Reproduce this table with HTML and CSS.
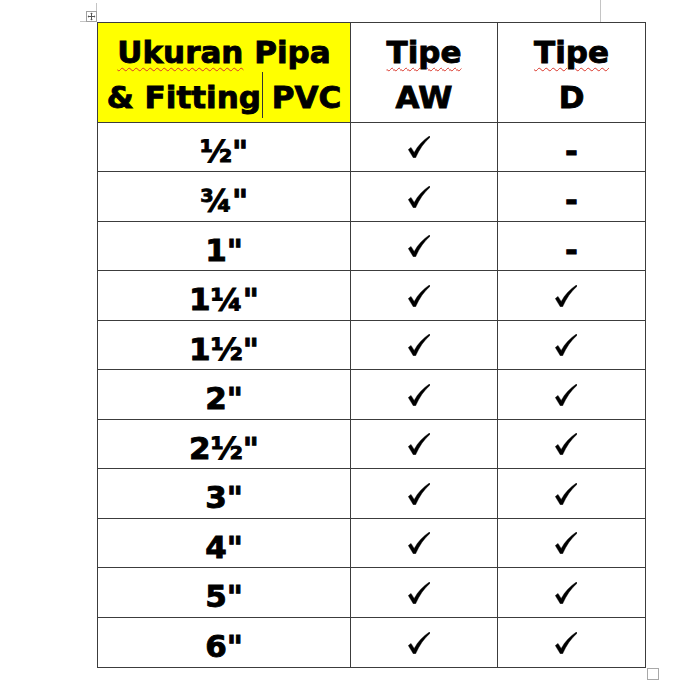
FILE: index.html
```html
<!DOCTYPE html>
<html>
<head>
<meta charset="utf-8">
<link rel="stylesheet" href="styles.css">
</head>
<body>
<div class="page">
  <span class="mark mark-tl-v"></span>
  <span class="mark mark-tl-h"></span>
  <span class="mark mark-tr-v"></span>
  <span class="handle"><svg width="11" height="11" viewBox="0 0 11 11"><rect x="0.5" y="0.5" width="10" height="10" fill="#fff" stroke="#a0a0a0"/><path d="M5.5 2v7M2 5.5h7" stroke="#555" stroke-width="1"/><path d="M5.5 1.6l-1.3 1.4h2.6zM5.5 9.4l-1.3-1.4h2.6zM1.6 5.5l1.4-1.3v2.6zM9.4 5.5l-1.4-1.3v2.6z" fill="#555"/></svg></span>
  <div class="grid">
    <div class="cell head yellow"><div class="hl"><span class="sp">Ukuran</span> Pipa<br>&amp; Fitting<span class="caret"></span> PVC</div></div>
    <div class="cell head"><div class="hl"><span class="sp">Tipe</span><br>AW</div></div>
    <div class="cell head"><div class="hl"><span class="sp">Tipe</span><br>D</div></div>

    <div class="cell txt">½"</div><div class="cell ck"><svg class="tick" viewBox="0 0 22 22"><path d="M0.3 13.6L3 11.4L6.2 16.4C10 9.6 15 4.2 21.4 0L22.2 1.1C16.2 6.4 11.4 13 7.6 21.8L5.3 21.8Z"/></svg></div><div class="cell txt">-</div>
    <div class="cell txt">¾"</div><div class="cell ck"><svg class="tick" viewBox="0 0 22 22"><path d="M0.3 13.6L3 11.4L6.2 16.4C10 9.6 15 4.2 21.4 0L22.2 1.1C16.2 6.4 11.4 13 7.6 21.8L5.3 21.8Z"/></svg></div><div class="cell txt">-</div>
    <div class="cell txt">1"</div><div class="cell ck"><svg class="tick" viewBox="0 0 22 22"><path d="M0.3 13.6L3 11.4L6.2 16.4C10 9.6 15 4.2 21.4 0L22.2 1.1C16.2 6.4 11.4 13 7.6 21.8L5.3 21.8Z"/></svg></div><div class="cell txt">-</div>
    <div class="cell txt">1¼"</div><div class="cell ck"><svg class="tick" viewBox="0 0 22 22"><path d="M0.3 13.6L3 11.4L6.2 16.4C10 9.6 15 4.2 21.4 0L22.2 1.1C16.2 6.4 11.4 13 7.6 21.8L5.3 21.8Z"/></svg></div><div class="cell ck"><svg class="tick" viewBox="0 0 22 22"><path d="M0.3 13.6L3 11.4L6.2 16.4C10 9.6 15 4.2 21.4 0L22.2 1.1C16.2 6.4 11.4 13 7.6 21.8L5.3 21.8Z"/></svg></div>
    <div class="cell txt">1½"</div><div class="cell ck"><svg class="tick" viewBox="0 0 22 22"><path d="M0.3 13.6L3 11.4L6.2 16.4C10 9.6 15 4.2 21.4 0L22.2 1.1C16.2 6.4 11.4 13 7.6 21.8L5.3 21.8Z"/></svg></div><div class="cell ck"><svg class="tick" viewBox="0 0 22 22"><path d="M0.3 13.6L3 11.4L6.2 16.4C10 9.6 15 4.2 21.4 0L22.2 1.1C16.2 6.4 11.4 13 7.6 21.8L5.3 21.8Z"/></svg></div>
    <div class="cell txt">2"</div><div class="cell ck"><svg class="tick" viewBox="0 0 22 22"><path d="M0.3 13.6L3 11.4L6.2 16.4C10 9.6 15 4.2 21.4 0L22.2 1.1C16.2 6.4 11.4 13 7.6 21.8L5.3 21.8Z"/></svg></div><div class="cell ck"><svg class="tick" viewBox="0 0 22 22"><path d="M0.3 13.6L3 11.4L6.2 16.4C10 9.6 15 4.2 21.4 0L22.2 1.1C16.2 6.4 11.4 13 7.6 21.8L5.3 21.8Z"/></svg></div>
    <div class="cell txt">2½"</div><div class="cell ck"><svg class="tick" viewBox="0 0 22 22"><path d="M0.3 13.6L3 11.4L6.2 16.4C10 9.6 15 4.2 21.4 0L22.2 1.1C16.2 6.4 11.4 13 7.6 21.8L5.3 21.8Z"/></svg></div><div class="cell ck"><svg class="tick" viewBox="0 0 22 22"><path d="M0.3 13.6L3 11.4L6.2 16.4C10 9.6 15 4.2 21.4 0L22.2 1.1C16.2 6.4 11.4 13 7.6 21.8L5.3 21.8Z"/></svg></div>
    <div class="cell txt">3"</div><div class="cell ck"><svg class="tick" viewBox="0 0 22 22"><path d="M0.3 13.6L3 11.4L6.2 16.4C10 9.6 15 4.2 21.4 0L22.2 1.1C16.2 6.4 11.4 13 7.6 21.8L5.3 21.8Z"/></svg></div><div class="cell ck"><svg class="tick" viewBox="0 0 22 22"><path d="M0.3 13.6L3 11.4L6.2 16.4C10 9.6 15 4.2 21.4 0L22.2 1.1C16.2 6.4 11.4 13 7.6 21.8L5.3 21.8Z"/></svg></div>
    <div class="cell txt">4"</div><div class="cell ck"><svg class="tick" viewBox="0 0 22 22"><path d="M0.3 13.6L3 11.4L6.2 16.4C10 9.6 15 4.2 21.4 0L22.2 1.1C16.2 6.4 11.4 13 7.6 21.8L5.3 21.8Z"/></svg></div><div class="cell ck"><svg class="tick" viewBox="0 0 22 22"><path d="M0.3 13.6L3 11.4L6.2 16.4C10 9.6 15 4.2 21.4 0L22.2 1.1C16.2 6.4 11.4 13 7.6 21.8L5.3 21.8Z"/></svg></div>
    <div class="cell txt">5"</div><div class="cell ck"><svg class="tick" viewBox="0 0 22 22"><path d="M0.3 13.6L3 11.4L6.2 16.4C10 9.6 15 4.2 21.4 0L22.2 1.1C16.2 6.4 11.4 13 7.6 21.8L5.3 21.8Z"/></svg></div><div class="cell ck"><svg class="tick" viewBox="0 0 22 22"><path d="M0.3 13.6L3 11.4L6.2 16.4C10 9.6 15 4.2 21.4 0L22.2 1.1C16.2 6.4 11.4 13 7.6 21.8L5.3 21.8Z"/></svg></div>
    <div class="cell txt">6"</div><div class="cell ck"><svg class="tick" viewBox="0 0 22 22"><path d="M0.3 13.6L3 11.4L6.2 16.4C10 9.6 15 4.2 21.4 0L22.2 1.1C16.2 6.4 11.4 13 7.6 21.8L5.3 21.8Z"/></svg></div><div class="cell ck"><svg class="tick" viewBox="0 0 22 22"><path d="M0.3 13.6L3 11.4L6.2 16.4C10 9.6 15 4.2 21.4 0L22.2 1.1C16.2 6.4 11.4 13 7.6 21.8L5.3 21.8Z"/></svg></div>
  </div>
  <span class="endbox"></span>
</div>
</body>
</html>
```
FILE: styles.css
```css
html, body {
  margin: 0;
  padding: 0;
  background: #fff;
}
.page {
  position: relative;
  width: 700px;
  height: 700px;
  box-sizing: border-box;
  padding: 22px 0 0 97px;
  font-family: "DejaVu Sans", "Liberation Sans", sans-serif;
  font-weight: bold;
  color: #000;
}
.grid {
  display: grid;
  grid-template-columns: 252px 146px 147px;
  grid-template-rows: 99px repeat(5, 48px 49px) 49px;
  gap: 1px;
  background: #3c3c3c;
  border: 1px solid #3c3c3c;
  width: max-content;
}
.cell {
  background: #fff;
  display: flex;
  align-items: center;
  justify-content: center;
  text-align: center;
  box-sizing: border-box;
}
.head {
  font-size: 31px;
  line-height: 45px;
  padding-top: 5px;
  white-space: nowrap;
  -webkit-text-stroke: 0.9px #000;
}
.hl {
  text-align: center;
}
.yellow {
  background: #ffff00;
}
.sp {
  text-decoration: underline wavy #d9352a;
  text-decoration-thickness: 1px;
  text-underline-offset: 4px;
}
.caret {
  display: inline-block;
  position: relative;
  width: 0;
  height: 0;
}
.caret::after {
  content: "";
  position: absolute;
  left: 1px;
  bottom: -10px;
  width: 1px;
  height: 46px;
  background: #333;
}
.txt {
  font-size: 31px;
  line-height: 38px;
  padding-top: 7px;
  -webkit-text-stroke: 0.9px #000;
}
.ck {
  padding-right: 11px;
}
.tick {
  width: 22px;
  height: 22px;
  fill: #000;
  stroke: #000;
  stroke-width: 0.4;
  display: block;
}
.mark {
  position: absolute;
  background: #c4c4c4;
}
.mark-tl-v {
  left: 96px;
  top: 3px;
  width: 1px;
  height: 19px;
}
.mark-tl-h {
  left: 80px;
  top: 21px;
  width: 17px;
  height: 1px;
}
.mark-tr-v {
  left: 600px;
  top: 0;
  width: 1px;
  height: 22px;
}
.handle {
  position: absolute;
  left: 86px;
  top: 11px;
  width: 11px;
  height: 11px;
  line-height: 0;
}
.endbox {
  position: absolute;
  left: 647px;
  top: 668px;
  width: 10px;
  height: 10px;
  border: 1px solid #a8a8a8;
}
```
